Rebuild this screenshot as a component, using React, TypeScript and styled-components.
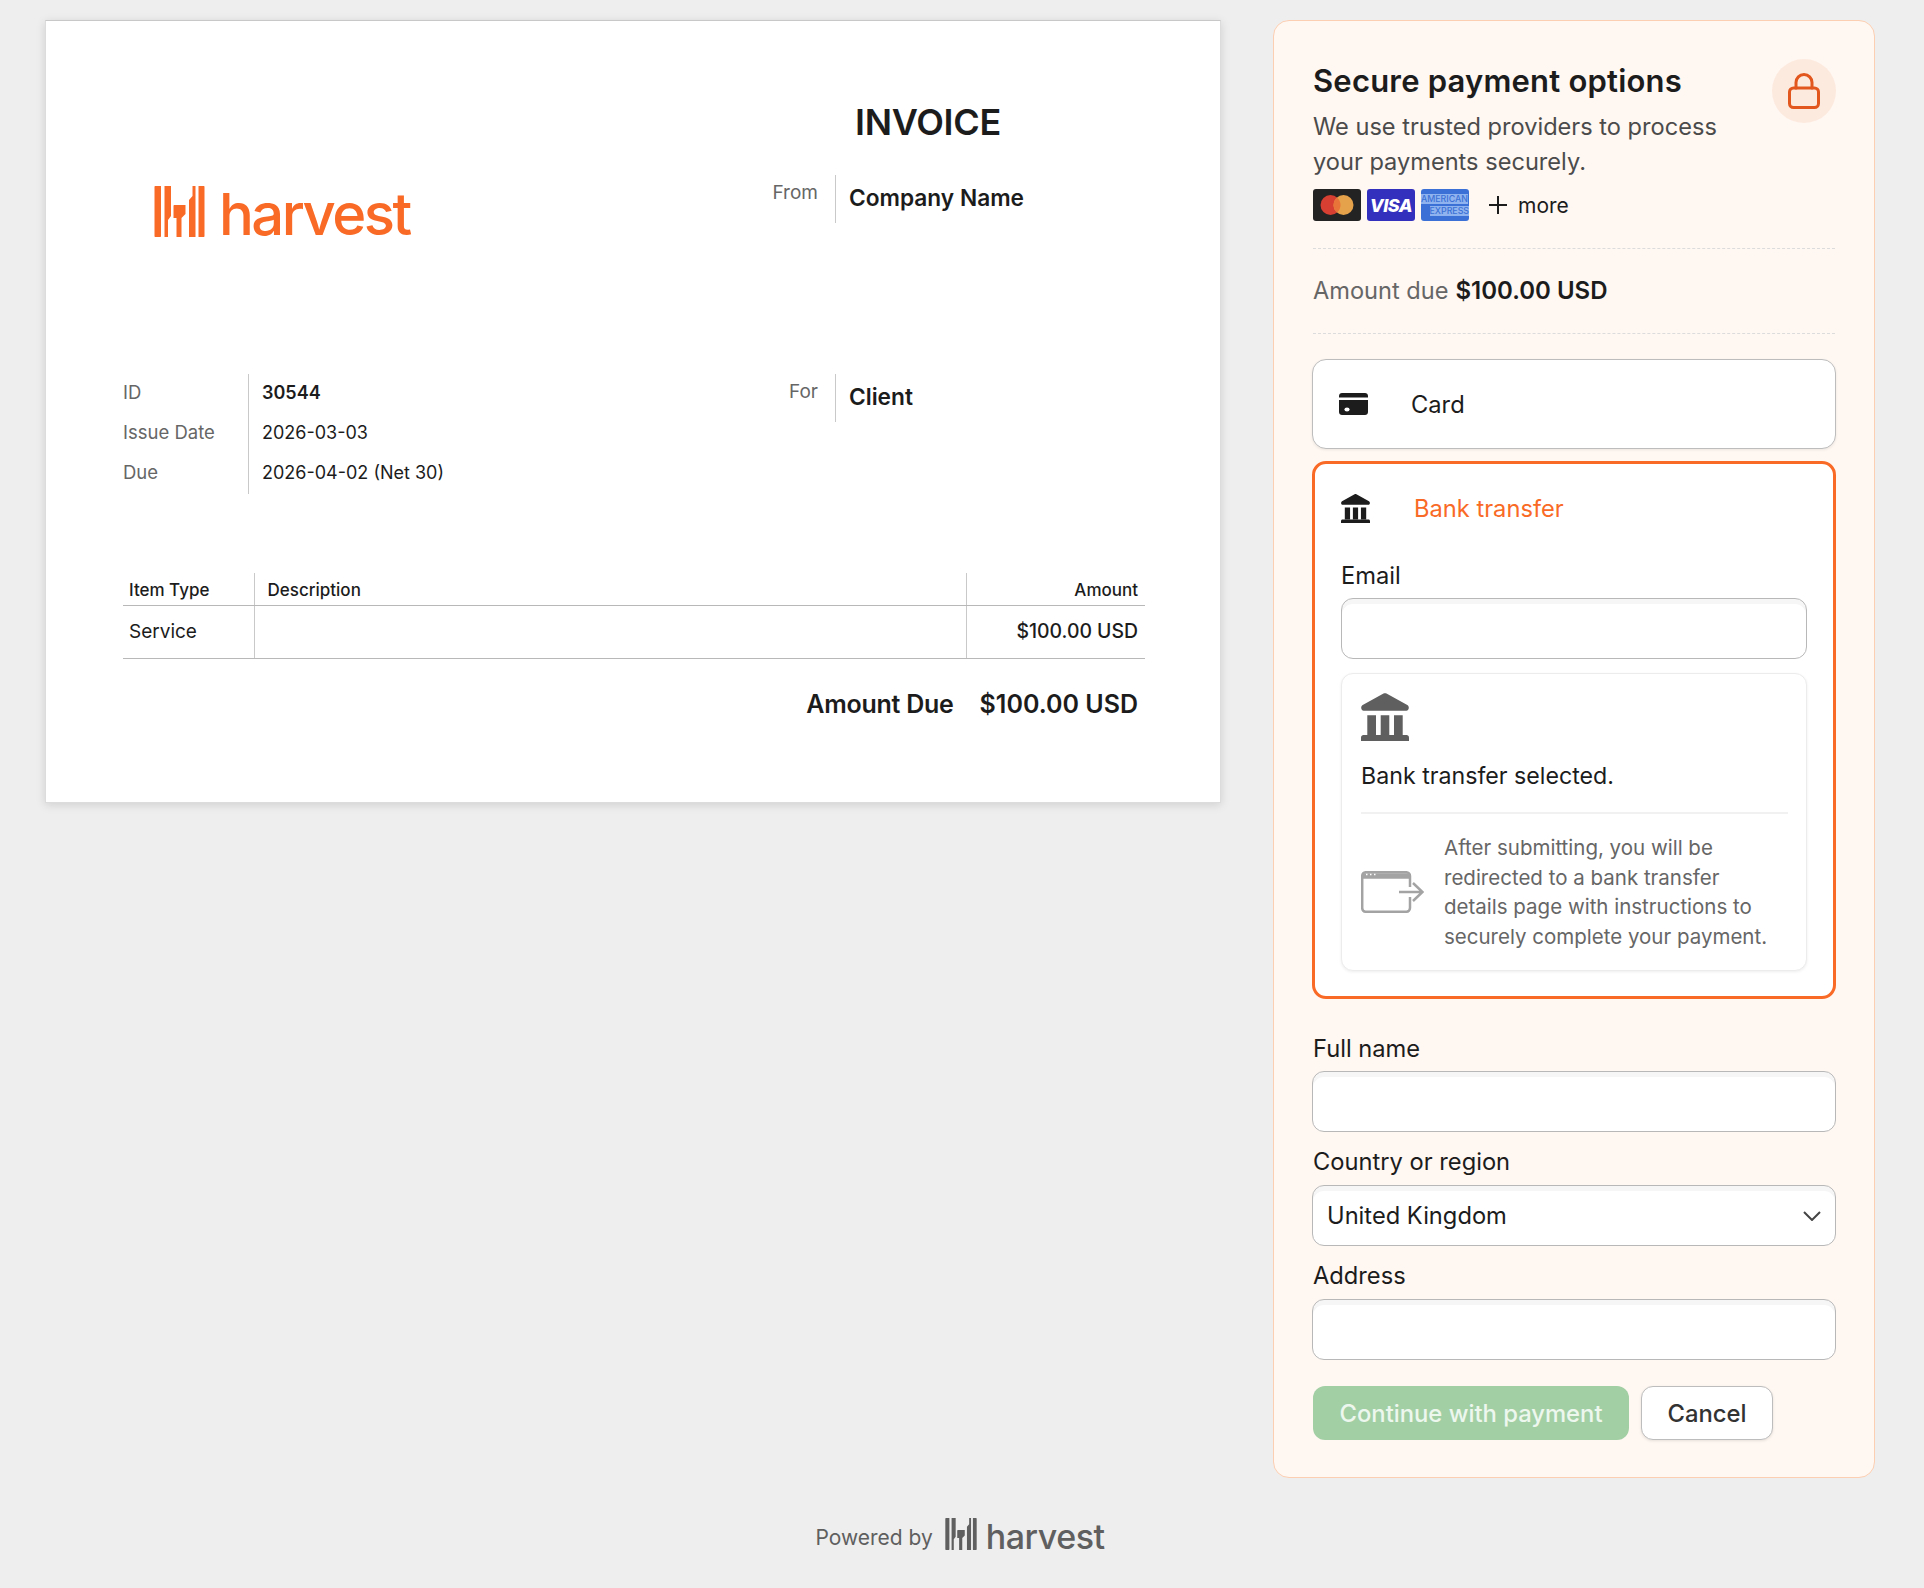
import React from 'react';
import styled, { createGlobalStyle } from 'styled-components';

const FONT = `Inter, "Noto Sans", "Liberation Sans", sans-serif`;

const GlobalStyle = createGlobalStyle`
  * { box-sizing: border-box; }
  html, body { margin: 0; padding: 0; background: #eeeeee; }
  body { font-family: ${FONT}; color: #1c1c1c; }
  svg { display: block; flex-shrink: 0; }
`;

const HarvestMark = ({ height, color }: { height: number; color: string }) => (
  <svg width={height} height={height} viewBox="0 0 50 51" fill={color}>
    <path d="M0 1c0-.6.400-1 1-1h5.500v50c0 .6-.400 1-1 1H1c-.6 0-1-.4-1-1z" />
    <path d="M10 0h6.500v30l-3 4v17H10z" />
    <path d="M19 20c0-.6.400-1 1-1h11v9l-4 4v19h-5V32h-3z" />
    <path d="M34.500 14l3.500-4V0h3v51h-6.500z" />
    <path d="M44 0h5c.6 0 1 .4 1 1v49c0 .6-.4 1-1 1h-5z" />
  </svg>
);

const BankIcon = ({ size, color }: { size: number; color: string }) => (
  <svg width={size} height={size} viewBox="0 0 48 48" fill={color}>
    <path d="M22.500.6c1-.6 2-.6 3 0l20.800 11.400c2.500 1.400 1.700 5.700-1 5.700H2.700c-2.700 0-3.500-4.300-1-5.700z" />
    <path d="M6.300 22.300H15V42H6.300zM19.700 22.300h8.600V42h-8.600zM33 22.300h8.700V42H33z" />
    <path d="M2.500 42h43c1.400 0 2.500 1.100 2.500 2.500V48H0v-3.500C0 43.100 1.100 42 2.500 42z" />
  </svg>
);

const CardIcon = () => (
  <svg width="29" height="22" viewBox="0 0 29 22" fill="#1c1c1c">
    <path d="M3 0h23c1.700 0 3 1.300 3 3v1.500H0V3c0-1.700 1.300-3 3-3z" />
    <path d="M0 7h29v12c0 1.700-1.300 3-3 3H3c-1.700 0-3-1.300-3-3z" />
    <ellipse cx="8" cy="16.500" rx="2.600" ry="2" fill="#fff" />
  </svg>
);

const RedirectIcon = () => (
  <svg width="63" height="42" viewBox="0 0 63 42" fill="none" stroke="#a3a3a3" strokeWidth="2.500">
    <path d="M49 26v11c0 2-1.500 3.700-3.500 3.700h-41C2.500 40.700 1.200 39 1.200 37V5c0-2 1.300-3.700 3.300-3.700h41c2 0 3.500 1.700 3.500 3.700v11" />
    <path d="M1.500 5h47" strokeWidth="5.500" />
    <path d="M38 21h24M52 12l9.500 9-9.500 9" />
    <path d="M5 3.500h1.500M9 3.500h1.500M13 3.500h1.500" stroke="#fff" strokeWidth="1.500" />
  </svg>
);

const LockIcon = () => (
  <svg width="32" height="36" viewBox="0 0 32 36" fill="none" stroke="#e2571d" strokeWidth="3" strokeLinecap="round">
    <rect x="1.500" y="15" width="29" height="19.500" rx="4" />
    <path d="M8 15V9.500a8 8 0 0 1 16 0V15" />
  </svg>
);

const MastercardIcon = () => (
  <svg width="48" height="32" viewBox="0 0 48 32">
    <rect width="48" height="32" rx="3" fill="#232323" />
    <circle cx="17.500" cy="16" r="10" fill="#d63f32" />
    <circle cx="30.500" cy="16" r="10" fill="#e6a24a" />
    <path d="M24 8.400a10 10 0 0 1 0 15.200a10 10 0 0 1 0-15.200z" fill="#e8743a" />
  </svg>
);

const Page = styled.div`
  width: 1924px;
  height: 1588px;
  padding: 20px 49px 0 45px;
`;
const Columns = styled.div`
  display: flex;
  justify-content: space-between;
  align-items: flex-start;
`;

const Invoice = styled.section`
  width: 1176px;
  height: 783px;
  padding: 79px 75px 0 77px;
  background: #fff;
  border: 1px solid #dcdcdc;
  border-top-color: #c8c8c8;
  box-shadow: 0 2px 9px rgba(0, 0, 0, 0.13);
`;
const InvoiceTitle = styled.h1`
  margin: 0 0 31px 732px;
  font-size: 36px;
  line-height: 44px;
  font-weight: 600;
  letter-spacing: -0.3px;
`;
const TopRow = styled.div<{ $gap?: number }>`
  display: flex;
  justify-content: space-between;
  align-items: flex-start;
  margin-top: ${(p) => p.$gap ?? 0}px;
`;
const Logo = styled.div<{ $color: string; $size: number; $top: number; $left: number; $gap: number; $spacing: number }>`
  display: flex;
  align-items: flex-end;
  gap: ${(p) => p.$gap}px;
  margin: ${(p) => p.$top}px 0 0 ${(p) => p.$left}px;
  color: ${(p) => p.$color};
  font-size: ${(p) => p.$size}px;
  font-weight: 500;
  line-height: 0.8;
  letter-spacing: ${(p) => p.$spacing}px;
`;
const LogoWord = styled.span``;
const Party = styled.div`
  display: grid;
  grid-template-columns: 100px 1fr;
  width: 410px;
  height: 48px;
`;
const PartyLabel = styled.div`
  padding: 3px 17px 0 0;
  text-align: right;
  font-size: 19px;
  line-height: 30px;
  color: #666;
`;
const PartyName = styled.div`
  padding: 8px 0 0 13px;
  border-left: 1px solid #c9c9c9;
  font-size: 22.700px;
  line-height: 30px;
  font-weight: 600;
`;
const Meta = styled.div`
  display: grid;
  grid-template-columns: 125px 1fr;
  grid-auto-rows: 40px;
  align-items: stretch;
`;
const MetaLabel = styled.div`
  display: flex;
  align-items: center;
  padding-bottom: 4px;
  font-size: 18.500px;
  color: #666;
`;
const MetaValue = styled.div<{ $strong?: boolean }>`
  display: flex;
  align-items: center;
  padding: 0 0 4px 13px;
  border-left: 1px solid #c9c9c9;
  font-size: 18px;
  font-weight: ${(p) => (p.$strong ? 600 : 400)};
`;
const Items = styled.table`
  width: 100%;
  margin-top: 79px;
  border-collapse: collapse;
  table-layout: fixed;
`;
const HeadCell = styled.th<{ $right?: boolean; $width?: number }>`
  width: ${(p) => (p.$width ? `${p.$width}px` : 'auto')};
  height: 32px;
  padding: 2px 7px 0 ${(p) => (p.$right ? 7 : 13)}px;
  border-bottom: 1px solid #b8b8b8;
  border-left: 1px solid #c9c9c9;
  text-align: ${(p) => (p.$right ? 'right' : 'left')};
  font-size: 17px;
  font-weight: 500;
  &:first-child { border-left: 0; padding-left: 6px; }
`;
const BodyCell = styled.td<{ $right?: boolean }>`
  height: 53px;
  padding: 0 7px 1px;
  border-bottom: 1px solid #b8b8b8;
  border-left: 1px solid #c9c9c9;
  text-align: ${(p) => (p.$right ? 'right' : 'left')};
  font-size: ${(p) => (p.$right ? 19.4 : 19)}px;
  font-weight: ${(p) => (p.$right ? 500 : 400)};
  &:first-child { border-left: 0; padding-left: 6px; }
`;
const Total = styled.div`
  display: flex;
  justify-content: flex-end;
  gap: 26px;
  margin-top: 30px;
  padding-right: 7px;
  font-size: 25px;
  line-height: 30px;
  font-weight: 600;
`;
const TotalLabel = styled.span`
  letter-spacing: -0.25px;
`;

const Panel = styled.aside`
  width: 602px;
  padding: 38px 39px 37px;
  background: #fff7f2;
  border: 1px solid #fccfb2;
  border-radius: 16px;
`;
const PanelHead = styled.header`
  display: flex;
  justify-content: space-between;
  align-items: flex-start;
`;
const PanelTitle = styled.h2`
  margin: 4px 0 11px;
  font-size: 31px;
  line-height: 36px;
  font-weight: 600;
  letter-spacing: 0.2px;
`;
const PanelText = styled.p`
  margin: 0;
  width: 440px;
  font-size: 23.600px;
  line-height: 34.500px;
  color: #4b4b4b;
`;
const LockCircle = styled.div`
  display: flex;
  align-items: center;
  justify-content: center;
  width: 64px;
  height: 64px;
  margin-right: -1px;
  border-radius: 50%;
  background: #fdeadf;
`;
const Brands = styled.div`
  display: flex;
  align-items: center;
  gap: 6px;
  margin-top: 10px;
  padding-bottom: 27px;
  border-bottom: 1px dashed #dcdcdc;
`;
const Brand = styled.div<{ $bg: string }>`
  display: flex;
  flex-direction: column;
  justify-content: center;
  width: 48px;
  height: 32px;
  border-radius: 3px;
  background: ${(p) => p.$bg};
  color: #fff;
`;
const VisaMark = styled.span`
  text-align: center;
  font-size: 18px;
  font-weight: 800;
  font-style: italic;
  letter-spacing: -0.5px;
`;
const AmexLine = styled.span<{ $right?: boolean }>`
  display: block;
  align-self: ${(p) => (p.$right ? 'flex-end' : 'flex-start')};
  background: #8fb3ee;
  color: #3b71d6;
  font-size: 8.800px;
  font-weight: 500;
  line-height: 10px;
  margin: 1px 0;
  white-space: nowrap;
`;
const More = styled.div`
  display: flex;
  align-items: center;
  gap: 11px;
  margin-left: 14px;
  font-size: 21px;
`;
const AmountDue = styled.div`
  display: flex;
  align-items: center;
  gap: 7px;
  height: 85px;
  padding-bottom: 1px;
  border-bottom: 1px dashed #dcdcdc;
  font-size: 23.600px;
  color: #666;
`;
const AmountValue = styled.strong`
  font-size: 24px;
  font-weight: 600;
  color: #1c1c1c;
`;
const MethodCard = styled.div<{ $active?: boolean }>`
  margin: ${(p) => (p.$active ? '12px -1px 0' : '25px -1px 0')};
  padding: ${(p) => (p.$active ? '0 26px 25px' : '0 26px')};
  background: #fff;
  border: ${(p) => (p.$active ? '3px solid #f96a26' : '1px solid #bdbdbd')};
  border-radius: 14px;
  box-shadow: ${(p) => (p.$active ? 'none' : '0 1px 3px rgba(0, 0, 0, 0.08)')};
`;
const MethodRow = styled.div<{ $active?: boolean }>`
  display: flex;
  align-items: center;
  height: 88px;
  gap: ${(p) => (p.$active ? 44 : 43)}px;
  color: ${(p) => (p.$active ? '#f96a26' : '#1c1c1c')};
  font-size: 23.700px;
`;
const FieldLabel = styled.label<{ $top?: number; $bottom?: number }>`
  display: block;
  margin-top: ${(p) => p.$top ?? 15}px;
  margin-bottom: ${(p) => p.$bottom ?? 8}px;
  font-size: 23.700px;
  line-height: 30px;
  color: #1c1c1c;
`;
const TextInput = styled.div`
  display: flex;
  align-items: center;
  justify-content: space-between;
  height: 61px;
  padding: 0 14px;
  background: #fff;
  border: 1px solid #b8b8b8;
  border-radius: 12px;
  box-shadow: inset 0 5px 0 #f6f6f6;
  font-size: 23.700px;
`;
const WideField = styled.div`
  margin: 0 -1px;
`;
const InfoBox = styled.div`
  margin-top: 14px;
  padding: 19px 18px 19px 19px;
  background: #fff;
  border: 1px solid #ececec;
  border-radius: 12px;
  box-shadow: 0 1px 3px rgba(0, 0, 0, 0.07);
`;
const InfoTitle = styled.p`
  margin: 18px 0 19px;
  font-size: 23.200px;
  line-height: 34px;
`;
const InfoRow = styled.div`
  display: flex;
  align-items: center;
  gap: 20px;
  padding-top: 19px;
  border-top: 2px solid #f1f1f1;
`;
const InfoText = styled.p`
  margin: 0;
  font-size: 20.500px;
  line-height: 29.500px;
  color: #666;
`;
const Actions = styled.div`
  display: flex;
  gap: 12px;
  margin-top: 26px;
`;
const Button = styled.button<{ $primary?: boolean }>`
  height: 54px;
  width: ${(p) => (p.$primary ? 316 : 132)}px;
  padding: 0;
  background: ${(p) => (p.$primary ? '#a3cfa5' : '#fff')};
  border: ${(p) => (p.$primary ? '0' : '1px solid #bdbdbd')};
  border-radius: 12px;
  box-shadow: ${(p) => (p.$primary ? 'none' : '0 1px 3px rgba(0, 0, 0, 0.1)')};
  color: ${(p) => (p.$primary ? '#edf7ee' : '#333')};
  font-family: ${FONT};
  font-size: 23.800px;
  font-weight: 500;
`;

const Footer = styled.footer`
  display: flex;
  justify-content: center;
  align-items: flex-end;
  gap: 12px;
  margin-top: 40px;
  color: #5f5f5f;
  font-size: 21px;
`;

export default function App() {
  return (
    <Page>
      <GlobalStyle />
      <Columns>
        <Invoice>
          <InvoiceTitle>INVOICE</InvoiceTitle>
          <TopRow>
            <Logo $color="#f96a26" $size={58} $top={11} $left={31} $gap={14} $spacing={-2.550}>
              <HarvestMark height={51} color="#f96a26" />
              <LogoWord>harvest</LogoWord>
            </Logo>
            <Party>
              <PartyLabel>From</PartyLabel>
              <PartyName>Company Name</PartyName>
            </Party>
          </TopRow>
          <TopRow $gap={137}>
            <Meta>
              <MetaLabel>ID</MetaLabel>
              <MetaValue $strong>30544</MetaValue>
              <MetaLabel>Issue Date</MetaLabel>
              <MetaValue>2026-03-03</MetaValue>
              <MetaLabel>Due</MetaLabel>
              <MetaValue>2026-04-02 (Net 30)</MetaValue>
            </Meta>
            <Party>
              <PartyLabel>For</PartyLabel>
              <PartyName>Client</PartyName>
            </Party>
          </TopRow>
          <Items>
            <thead>
              <tr>
                <HeadCell $width={131}>Item Type</HeadCell>
                <HeadCell>Description</HeadCell>
                <HeadCell $right $width={179}>Amount</HeadCell>
              </tr>
            </thead>
            <tbody>
              <tr>
                <BodyCell>Service</BodyCell>
                <BodyCell />
                <BodyCell $right>$100.00 USD</BodyCell>
              </tr>
            </tbody>
          </Items>
          <Total>
            <TotalLabel>Amount Due</TotalLabel>
            <span>$100.00 USD</span>
          </Total>
        </Invoice>

        <Panel>
          <PanelHead>
            <div>
              <PanelTitle>Secure payment options</PanelTitle>
              <PanelText>We use trusted providers to process your payments securely.</PanelText>
            </div>
            <LockCircle>
              <LockIcon />
            </LockCircle>
          </PanelHead>
          <Brands>
            <MastercardIcon />
            <Brand $bg="#3430be">
              <VisaMark>VISA</VisaMark>
            </Brand>
            <Brand $bg="#3b71d6">
              <AmexLine>AMERICAN</AmexLine>
              <AmexLine $right>EXPRESS</AmexLine>
            </Brand>
            <More>
              <svg width="18" height="18" viewBox="0 0 18 18" stroke="#1c1c1c" strokeWidth="2">
                <path d="M9 0v18M0 9h18" />
              </svg>
              more
            </More>
          </Brands>
          <AmountDue>
            Amount due <AmountValue>$100.00 USD</AmountValue>
          </AmountDue>

          <MethodCard>
            <MethodRow>
              <CardIcon />
              Card
            </MethodRow>
          </MethodCard>
          <MethodCard $active>
            <MethodRow $active>
              <BankIcon size={29} color="#1c1c1c" />
              Bank transfer
            </MethodRow>
            <FieldLabel $top={9} $bottom={7}>Email</FieldLabel>
            <TextInput />
            <InfoBox>
              <BankIcon size={48} color="#5f5f5f" />
              <InfoTitle>Bank transfer selected.</InfoTitle>
              <InfoRow>
                <RedirectIcon />
                <InfoText>
                  After submitting, you will be redirected to a bank transfer details page with
                  instructions to securely complete your payment.
                </InfoText>
              </InfoRow>
            </InfoBox>
          </MethodCard>

          <FieldLabel $top={35} $bottom={7}>Full name</FieldLabel>
          <WideField><TextInput /></WideField>
          <FieldLabel>Country or region</FieldLabel>
          <WideField>
            <TextInput>
              United Kingdom
              <svg width="18" height="10" viewBox="0 0 18 10" fill="none" stroke="#444" strokeWidth="2">
                <path d="M1 1l8 8 8-8" />
              </svg>
            </TextInput>
          </WideField>
          <FieldLabel>Address</FieldLabel>
          <WideField><TextInput /></WideField>
          <Actions>
            <Button $primary>Continue with payment</Button>
            <Button>Cancel</Button>
          </Actions>
        </Panel>
      </Columns>
      <Footer>
        <span>Powered by</span>
        <Logo $color="#5f5f5f" $size={34} $top={0} $left={0} $gap={9} $spacing={-0.500}>
          <HarvestMark height={32} color="#5f5f5f" />
          <LogoWord>harvest</LogoWord>
        </Logo>
      </Footer>
    </Page>
  );
}
